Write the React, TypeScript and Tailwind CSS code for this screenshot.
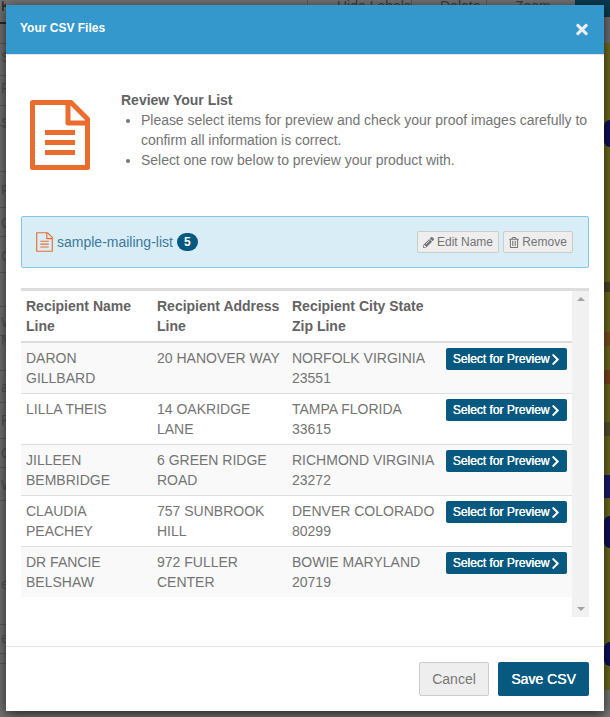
import React from 'react';
import { FaChevronRight, FaPencilAlt, FaTimes, FaRegTrashAlt } from 'react-icons/fa';

const rows = [
  ['DARON GILLBARD', '20 HANOVER WAY', 'NORFOLK VIRGINIA 23551'],
  ['LILLA THEIS', '14 OAKRIDGE LANE', 'TAMPA FLORIDA 33615'],
  ['JILLEEN BEMBRIDGE', '6 GREEN RIDGE ROAD', 'RICHMOND VIRGINIA 23272'],
  ['CLAUDIA PEACHEY', '757 SUNBROOK HILL', 'DENVER COLORADO 80299'],
  ['DR FANCIE BELSHAW', '972 FULLER CENTER', 'BOWIE MARYLAND 20719'],
];

// page behind the dialog, only the edges show
const leftLines = [43, 75, 105, 125, 171, 207, 236, 272, 306, 335, 370, 402, 438, 467, 500, 624, 653, 663];
const leftLetters: [number, string][] = [
  [57, 'S'], [88, 'R'], [123, 'S'], [190, 'F'], [223, 'C'], [256, 'C'], [322, 'W'], [340, 'M'],
  [387, 'a'], [420, 'R'], [453, 'C'], [485, 'W'], [584, 'e'], [638, 'e'],
];
const topLabels: [number, string][] = [[337, 'Hide Labels'], [440, 'Delete'], [515, 'Zoom']];

const FileIcon = ({ className = '', stroke = 5 }: { className?: string; stroke?: number }) => (
  <svg viewBox="0 0 60 70" className={className} fill="none" stroke="#ea6c2e" strokeWidth={stroke} strokeLinejoin="round">
    <path d="M2.500 2.500H41L57.500 19V67.500H2.500Z" />
    <path d="M38 2.500V23H57.500" />
    <path d="M15 32.500H45M15 42.500H45M15 52.500H45" />
  </svg>
);

const App: React.FC = () => {
  return (
    <div className="relative w-[610px] h-[717px] overflow-hidden bg-[#727272] pl-[6px] pt-[5px] font-['Liberation_Sans',sans-serif]">
      {/* backdrop */}
      <div className="absolute left-0 top-0 w-[6px] h-full overflow-hidden text-[14px] leading-[14px] text-[#555555]">
        <span className="absolute left-[1px] top-[-1px] text-[#222222]">K</span>
        <div className="absolute top-[22px] h-[2px] w-full bg-[#2a2a2a]" />
        {leftLines.map((y) => (
          <div key={y} className="absolute h-px w-full bg-[#5c5c5c]" style={{ top: y }} />
        ))}
        {leftLetters.map(([y, ch]) => (
          <span key={y} className="absolute left-[1px]" style={{ top: y - 7 }}>{ch}</span>
        ))}
      </div>
      <div className="absolute left-0 top-0 w-full h-[5px] overflow-hidden text-[14px] leading-[14px] text-[#3c3c3c]">
        <div className="absolute left-[307px] h-full w-px bg-[#5c5c5c]" />
        <div className="absolute left-[411px] h-full w-px bg-[#5c5c5c]" />
        <div className="absolute left-[486px] h-full w-px bg-[#5c5c5c]" />
        <div className="absolute left-[575px] right-0 h-full bg-[#0b3a4f]" />
        {topLabels.map(([x, label]) => (
          <span key={x} className="absolute top-[-1px]" style={{ left: x }}>{label}</span>
        ))}
      </div>
      <div className="absolute right-0 top-0 w-[6px] h-full bg-[#6e6a20]">
        <div className="h-[17px] bg-[#0b3a4f]" />
        <div className="h-[26px] bg-[#6f6f6f]" />
        <div className="absolute top-[120px] h-[27px] w-full rounded-l-full bg-[#10105a]" />
        <div className="absolute top-[282px] h-[10px] w-full bg-[#4a4628]" />
        <div className="absolute top-[332px] h-[14px] w-full bg-[#7a4f20]" />
        <div className="absolute top-[370px] h-[14px] w-full bg-[#7c4420]" />
        <div className="absolute top-[422px] h-[14px] w-full bg-[#55502c]" />
        <div className="absolute top-[475px] h-[23px] w-full bg-[#1a1a6a]" />
        <div className="absolute top-[516px] h-[32px] w-full rounded-l-full bg-[#10105a]" />
        <div className="absolute top-[642px] h-[24px] w-full rounded-l-full bg-[#10105a]" />
        <div className="absolute top-[690px] bottom-0 w-full bg-[#777777]" />
      </div>

      <div className="relative w-[598px] h-[706px] flex flex-col bg-white shadow-[0_3px_12px_rgba(0,0,0,0.7)]">
        <div className="h-[50px] shrink-0 flex items-start justify-between bg-[#3498cd] pl-[14px] pr-[16px] border-b border-[#e5e5e5]">
          <h4 className="mt-[15px] text-[12px] leading-[16px] font-bold text-white">Your CSV Files</h4>
          <FaTimes className="mt-[16px] w-[12px] h-[17px] text-[#e8eef2]" />
        </div>

        <div className="flex-1 px-[15px]">
          <div className="flex h-[161px]">
            <FileIcon className="ml-[9px] mt-[45px] w-[60px] h-[70px] shrink-0" />
            <div className="ml-[31px] mt-[35px] w-[468px] shrink-0 text-[14px] leading-[20px] text-[#747474]">
              <div className="font-bold text-[#636363]">Review Your List</div>
              <ul className="list-disc pl-[20px] tracking-[-0.03px]">
                <li>Please select items for preview and check your proof images carefully to confirm all information is correct.</li>
                <li>Select one row below to preview your product with.</li>
              </ul>
            </div>
          </div>

          <div className="h-[52px] flex items-center justify-between rounded-[2px] border border-[#85c5e5] bg-[#d9edf7] pl-[14px] pr-[15px]">
            <div className="flex items-center">
              <FileIcon className="w-[17px] h-[20px]" stroke={4} />
              <span className="ml-[4px] text-[14px] text-[#3b7a9c]">sample-mailing-list</span>
              <span className="ml-[4px] w-[21px] h-[18px] rounded-full bg-[#07597f] text-center text-[12px] leading-[18px] font-bold text-white">5</span>
            </div>
            <div className="flex gap-[4px]">
              <button type="button" className="h-[22px] w-[82px] flex items-center justify-center gap-[3px] rounded-[2px] border border-[#ccc] bg-[#eeeeee] text-[12px] text-[#747474]">
                <FaPencilAlt className="w-[11px] h-[11px]" />
                Edit Name
              </button>
              <button type="button" className="h-[22px] w-[70px] flex items-center justify-center gap-[3px] rounded-[2px] border border-[#ccc] bg-[#eeeeee] text-[12px] text-[#747474]">
                <FaRegTrashAlt className="w-[10px] h-[11px]" />
                Remove
              </button>
            </div>
          </div>

          <div className="mt-[20px] border-t-[3px] border-[#dddddd] h-[329px] flex">
            <table className="w-[551px] h-fit table-fixed border-collapse text-[14px] leading-[20px] text-[#747474]">
              <thead>
                <tr className="border-b-2 border-[#dddddd] text-left text-[#636363]">
                  <th className="w-[131px] p-[5px] font-bold">Recipient Name Line</th>
                  <th className="w-[135px] p-[5px] font-bold">Recipient Address Line</th>
                  <th className="w-[154px] p-[5px] font-bold">Recipient City State Zip Line</th>
                  <th className="w-[131px] p-[5px]" />
                </tr>
              </thead>
              <tbody>
                {rows.map((row, i) => (
                  <tr key={row[0]} className={`border-t border-[#dddddd] first:border-t-0 ${i % 2 === 0 ? 'bg-[#f9f9f9]' : 'bg-white'}`}>
                    {row.map((cell) => (
                      <td key={cell} className="h-[50px] p-[5px] align-top">{cell}</td>
                    ))}
                    <td className="p-[5px] align-top">
                      <button type="button" className="h-[22px] w-[121px] flex items-center justify-center gap-[2px] rounded-[2px] bg-[#07597f] text-[12px] text-white [text-shadow:0.4px_0_0_#fff]">
                        Select for Preview
                        <FaChevronRight className="w-[9px] h-[13px]" />
                      </button>
                    </td>
                  </tr>
                ))}
              </tbody>
            </table>
            <div className="w-[17px] flex flex-col items-center justify-between bg-[#f1f1f1] py-[6px]">
              <div className="w-0 h-0 border-x-[4px] border-x-transparent border-b-[4px] border-b-[#a3a3a3]" />
              <div className="w-0 h-0 border-x-[4px] border-x-transparent border-t-[4px] border-t-[#a3a3a3]" />
            </div>
          </div>
        </div>

        <div className="h-[65px] shrink-0 flex items-start justify-end gap-[9px] border-t border-[#e5e5e5] pt-[15px] pr-[15px]">
          <button type="button" className="h-[34px] w-[70px] rounded-[2px] border border-[#cccccc] bg-[#eeeeee] text-[14px] text-[#777777]">Cancel</button>
          <button type="button" className="h-[34px] w-[91px] rounded-[2px] bg-[#07597f] text-[14px] text-white [text-shadow:0.3px_0_0_#fff]">Save CSV</button>
        </div>
      </div>
    </div>
  );
};

export default App;
